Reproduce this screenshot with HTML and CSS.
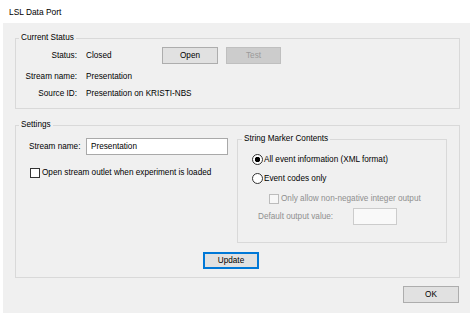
FILE: index.html
```html
<!DOCTYPE html>
<html lang="en">
<head>
<meta charset="utf-8">
<title>LSL Data Port</title>
<link rel="stylesheet" href="styles.css">
</head>
<body>
<div class="window">
  <div class="titlebar">LSL Data Port</div>
  <div class="client">
    <fieldset class="group status">
      <legend>Current Status</legend>
      <div class="status-grid">
        <span class="lbl">Status:</span>
        <div class="status-val">
          <span class="closed">Closed</span>
          <button class="btn open">Open</button>
          <button class="btn test" disabled>Test</button>
        </div>
        <span class="lbl">Stream name:</span>
        <span class="val">Presentation</span>
        <span class="lbl">Source ID:</span>
        <span class="val">Presentation on KRISTI-NBS</span>
      </div>
    </fieldset>

    <fieldset class="group settings">
      <legend>Settings</legend>
      <div class="settings-grid">
        <div class="left">
          <div class="name-row">
            <span class="name-lbl">Stream name:</span>
            <div class="textbox">Presentation</div>
          </div>
          <div class="check-row">
            <span class="checkbox"></span>
            <span>Open stream outlet when experiment is loaded</span>
          </div>
        </div>
        <fieldset class="group marker">
          <legend>String Marker Contents</legend>
          <div class="marker-body">
            <div class="opt r1"><span class="radio checked"></span><span>All event information (XML format)</span></div>
            <div class="opt r2"><span class="radio"></span><span>Event codes only</span></div>
            <div class="opt r3 disabled"><span class="checkbox dis"></span><span>Only allow non-negative integer output</span></div>
            <div class="opt r4 disabled"><span class="def-lbl">Default output value:</span><span class="smallbox"></span></div>
          </div>
        </fieldset>
      </div>
      <button class="btn update">Update</button>
    </fieldset>

    <div class="footer">
      <button class="btn ok">OK</button>
    </div>
  </div>
</div>
</body>
</html>
```

FILE: styles.css
```css
* { box-sizing: border-box; }

html, body {
  margin: 0;
  padding: 0;
  background: #ffffff;
}

body {
  font-family: "Liberation Sans", Arial, sans-serif;
  font-size: 8.2px;
  color: #000;
}

.window {
  width: 474px;
  height: 315px;
  background: #ffffff;
  overflow: hidden;
}

.titlebar {
  height: 23px;
  line-height: 24px;
  padding-left: 9px;
  font-size: 8.4px;
  color: #000;
}

.client {
  margin: 0 4px 0 3px;
  height: 290px;
  background: #f0f0f0;
  padding-top: 9px;
}

.group {
  margin: 0 10px 0 12px;
  padding: 0;
  border: 1px solid #d9d9d9;
  min-width: 0;
}

.group legend {
  padding: 0 2px;
  margin-left: 3px;
  line-height: 12px;
}

/* Current Status */
.status-grid {
  display: grid;
  grid-template-columns: 61px 1fr;
  grid-template-rows: 17px 21px 17px;
  column-gap: 9px;
  align-items: end;
  line-height: 17px;
  padding: 3px 0 6px 0;
}

.lbl { text-align: right; }

.status-val {
  display: flex;
  align-items: center;
}

.closed { width: 76px; }

.btn {
  font-family: inherit;
  font-size: inherit;
  color: #000;
  height: 17px;
  width: 56px;
  padding: 0;
  margin: 0;
  background: #e1e1e1;
  border: 1px solid #adadad;
  border-radius: 0;
  line-height: 15px;
}

.btn.test {
  width: 55px;
  margin-left: 8px;
  background: #cccccc;
  border-color: #bfbfbf;
  color: #9a9a9a;
}

/* Settings */
.settings { margin-top: 10px; }

.settings-grid {
  display: grid;
  grid-template-columns: 221px 210px;
  padding-top: 2px;
}

.left {
  padding: 5px 0 0 13px;
}

.name-row {
  display: flex;
  align-items: center;
  height: 17px;
}

.name-lbl { width: 57px; }

.textbox {
  width: 142px;
  height: 17px;
  border: 1px solid #a9a9a9;
  background: #fff;
  padding-left: 4px;
  line-height: 15px;
}

.check-row {
  display: flex;
  align-items: center;
  height: 17px;
  margin-top: 9px;
}

.checkbox {
  width: 10px;
  height: 10px;
  border: 1px solid #333;
  background: #fff;
  margin: 0 2px 0 1px;
  flex: none;
}

.marker {
  margin: 0;
  width: 210px;
}

.marker legend { margin-left: 4px; }

.marker-body {
  padding: 6px 0 17px 14px;
}

.opt {
  display: flex;
  align-items: center;
  height: 17px;
}

.r2 { margin-top: 2px; }
.r3 { margin-top: 3px; padding-left: 17px; }
.r4 { margin-top: 1px; padding-left: 6px; }

.radio {
  width: 11px;
  height: 11px;
  border: 1px solid #333;
  border-radius: 50%;
  background: #fff;
  margin-right: 1px;
  flex: none;
}

.radio.checked {
  background: radial-gradient(circle, #000 0 2.4px, #fff 3px);
}

.disabled { color: #8f8f8f; }

.checkbox.dis {
  border-color: #bcbcbc;
  background: #f7f7f7;
  margin: 0 2px 0 0;
}

.def-lbl { width: 95px; }

.smallbox {
  width: 44px;
  height: 17px;
  border: 1px solid #cccccc;
  background: #f9f9f9;
}

.btn.update {
  display: block;
  margin: 9px 0 8px 187px;
  border: 1px solid #0078d7;
  box-shadow: inset 0 0 0 1px #0078d7;
}

.footer {
  display: flex;
  justify-content: flex-end;
  padding-right: 11px;
  margin-top: 8px;
}
```
